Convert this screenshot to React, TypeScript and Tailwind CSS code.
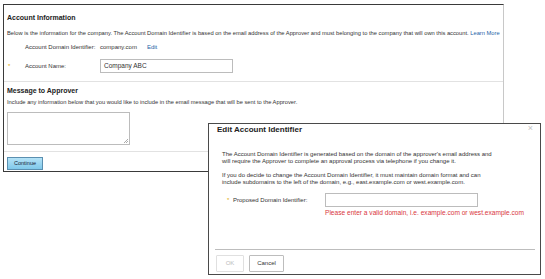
export default function App() {
  return (
    <div className="relative w-[545px] h-[279px] overflow-hidden bg-white font-['Liberation_Sans',Arial,sans-serif] text-[#333]">
      <div className="pl-[3px] pt-[4px]">
        <div className="flex h-[168px] w-[501px] flex-col border border-[#3a3a3a] border-r-[#c8c8c8] bg-white">
          {/* account information */}
          <div className="px-[3px] pt-[8px]">
            <h2 className="text-[7px] font-bold leading-[10px] text-[#222]">Account Information</h2>
            <p className="mt-[6px] whitespace-nowrap text-[5.75px] leading-[8px]">
              Below is the information for the company. The Account Domain Identifier is based on the email address of the Approver and must belonging to the company that will own this account.{' '}
              <span className="text-[#1f63a8]">Learn More</span>
            </p>
            <div className="mt-[6px] flex h-[8px] items-center text-[6px] leading-[8px]">
              <span className="ml-[18px] w-[75px]">Account Domain Identifier:</span>
              <span>company.com</span>
              <span className="ml-[10px] text-[#1f63a8]">Edit</span>
            </div>
            <div className="mt-[8px] flex h-[14px] items-center text-[6px]">
              <span className="ml-[1px] w-[17px] text-[#e0a800]">*</span>
              <span className="w-[75px]">Account Name:</span>
              <div className="flex h-[14px] w-[133px] items-center border border-[#bcbcbc] pl-[3px] text-[6.5px]">Company ABC</div>
            </div>
          </div>
          <div className="mt-[8px] border-t border-[#e2e2e2]" />

          {/* message to approver */}
          <div className="px-[3px] pt-[4px]">
            <h2 className="text-[7px] font-bold leading-[10px] text-[#222]">Message to Approver</h2>
            <p className="mt-[2px] text-[5.75px] leading-[8px]">
              Include any information below that you would like to include in the email message that will be sent to the Approver.
            </p>
            <div className="relative mt-[6px] h-[33px] w-[123px] border border-[#bcbcbc]">
              <svg className="absolute bottom-[1px] right-[1px]" width="5" height="5" viewBox="0 0 5 5">
                <path d="M5 1L1 5M5 3L3 5" stroke="#888" strokeWidth="0.7" />
              </svg>
            </div>
          </div>
          <div className="mt-[6px] border-t border-[#e2e2e2]" />
          <div className="px-[3px] pt-[5px]">
            <button className="flex h-[13px] w-[36px] items-center justify-center border border-[#5a8fb0] bg-gradient-to-b from-[#b5e3f7] to-[#7fc8ea] text-[5.5px] text-[#123]">
              Continue
            </button>
          </div>
        </div>
      </div>

      {/* edit dialog */}
      <div className="absolute left-[208px] top-[123px] flex h-[152px] w-[333px] flex-col border border-[#4a4a4a] bg-white">
        <span className="absolute right-[7px] top-[-1px] text-[9px] leading-[10px] text-[#c4c4c4]">×</span>
        <h3 className="pl-[8px] pt-[1px] text-[8px] font-bold leading-[10px] text-[#222]">Edit Account Identifier</h3>
        <div className="pl-[13px] text-[6px] leading-[7px]">
          <p className="mt-[16px]">
            The Account Domain Identifier is generated based on the domain of the approver's email address and
            <br />
            will require the Approver to complete an approval process via telephone if you change it.
          </p>
          <p className="mt-[7px]">
            If you do decide to change the Account Domain Identifier, it must maintain domain format and can
            <br />
            include subdomains to the left of the domain, e.g., east.example.com or west.example.com.
          </p>
          <div className="mt-[7px] flex h-[14px] items-center">
            <span className="ml-[5px] w-[6px] text-[#e0a800]">*</span>
            <span className="w-[92px]">Proposed Domain Identifier:</span>
            <div className="h-[14px] w-[153px] border border-[#bcbcbc]" />
          </div>
          <p className="ml-[103px] mt-[2px] whitespace-nowrap text-[6.6px] leading-[8px] text-[#d9363e]">
            Please enter a valid domain, i.e. example.com or west.example.com
          </p>
        </div>
        <div className="mt-auto ml-[6px] mr-[5px] border-t border-[#bdbdbd]" />
        <div className="mb-[2px] ml-[7px] mt-[5px] flex gap-[5px] text-[6px]">
          <button className="flex h-[17px] w-[28px] items-center justify-center rounded-[1px] border border-[#e0e0e0] text-[#bbb]">OK</button>
          <button className="flex h-[17px] w-[35px] items-center justify-center rounded-[1px] border border-[#bdbdbd] bg-white text-[#333]">Cancel</button>
        </div>
      </div>
    </div>
  );
}
